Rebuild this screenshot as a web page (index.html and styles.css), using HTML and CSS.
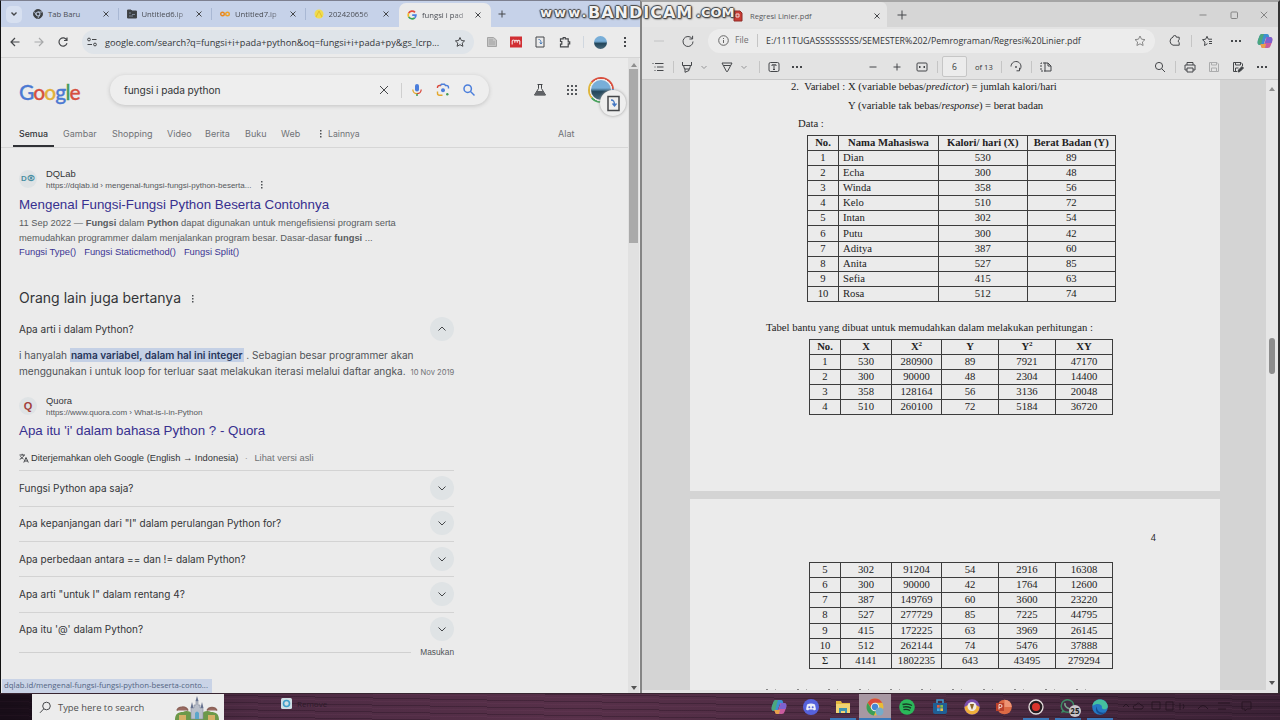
FILE: index.html
```
<!DOCTYPE html>
<html lang="id">
<head>
    <meta charset="UTF-8">
    <title>fungsi i pada python</title>
    <link rel="stylesheet" href="styles.css">
</head>
<body>
<div class="windows">
    <!-- Chrome -->
    <section class="chrome">
        <div class="tabs">
            <span class="tab-menu"><svg width="8" height="8" viewBox="0 0 8 8"><path d="M1.500 2.500 4 5l2.500-2.500" stroke-width="1.400"/></svg></span>
            <div class="tab">
                <svg class="fav" viewBox="0 0 10 10"><circle cx="5" cy="5" r="4.500" class="dark"/><circle cx="5" cy="5" r="2" fill="#3c4043" stroke="#c8d4ea"/><path d="M5 3h4M3.300 6 1.400 2.800M6.700 6 4.800 9.400" stroke="#c8d4ea" stroke-width=".8"/></svg>
                <span class="title">Tab Baru</span><svg class="x" viewBox="0 0 8 8"><path d="m1.500 1.500 5 5m0-5-5 5"/></svg>
            </div>
            <div class="tab">
                <svg class="fav" viewBox="0 0 10 10"><path d="M.500 1h3.500l1 1h4.500v7H.500z" class="dark"/><path d="M2 4h2M5 5.500h3M2 7h4" stroke="#9aa6bb" stroke-width=".7"/></svg>
                <span class="title fade">Untitled6.ip</span><svg class="x" viewBox="0 0 8 8"><path d="m1.500 1.500 5 5m0-5-5 5"/></svg>
            </div>
            <div class="tab">
                <svg class="fav" viewBox="0 0 10 10"><circle cx="2.500" cy="5" r="1.800" stroke="#e8871e" stroke-width="1.400"/><circle cx="7.500" cy="5" r="1.800" stroke="#efa024" stroke-width="1.400"/></svg>
                <span class="title fade">Untitled7.ip</span><svg class="x" viewBox="0 0 8 8"><path d="m1.500 1.500 5 5m0-5-5 5"/></svg>
            </div>
            <div class="tab last">
                <svg class="fav" viewBox="0 0 10 10"><circle cx="5" cy="5" r="4.500" fill="#f0dc50" stroke="none"/><path d="M2 8 5 2l3 6" stroke="#e3bf2b"/></svg>
                <span class="title fade">202420656</span><svg class="x" viewBox="0 0 8 8"><path d="m1.500 1.500 5 5m0-5-5 5"/></svg>
            </div>
            <div class="tab active">
                <svg class="fav" viewBox="0 0 10 10" stroke-width="1.700"><path d="M8 2.300A3.900 3.900 0 0 0 1.700 3.200" stroke="#e34a3c"/><path d="M1.700 3.200a3.900 3.900 0 0 0 0 3.600" stroke="#f0b928"/><path d="M1.700 6.800A3.900 3.900 0 0 0 7.700 7.800" stroke="#39a457"/><path d="M7.700 7.800A3.900 3.900 0 0 0 8.900 5.200H5.200" stroke="#4a7fe0"/></svg>
                <span class="title fade">fungsi i pad</span><svg class="x" viewBox="0 0 8 8"><path d="m1.500 1.500 5 5m0-5-5 5"/></svg>
            </div>
            <svg class="new-tab" viewBox="0 0 8 8"><path d="M4 .500v7M.500 4h7"/></svg>
        </div>

        <div class="address-row">
            <svg class="nav-icon" viewBox="0 0 12 12"><path d="M10.500 6H2m4-4L2 6l4 4"/></svg>
            <svg class="nav-icon faded" viewBox="0 0 12 12"><path d="M1.500 6H10M6 2l4 4-4 4"/></svg>
            <svg class="nav-icon" viewBox="0 0 12 12"><path d="M9.800 4.200A4.100 4.100 0 1 0 10 7.200M10 1.500v3H7"/></svg>
            <div class="url-pill">
                <svg width="12" height="12" viewBox="0 0 12 12"><circle cx="3" cy="3.500" r="1.400"/><path d="M6 3.500h4.500M1.500 8.500H6"/><circle cx="9" cy="8.500" r="1.400"/></svg>
                <span class="url">google.com/search?q=fungsi+i+pada+python&amp;oq=fungsi+i+pada+py&amp;gs_lcrp...</span>
                <svg width="12" height="12" viewBox="0 0 12 12"><path d="m6 1.500 1.400 3 3.200.4-2.400 2.200.7 3.200L6 8.700l-2.900 1.600.7-3.200L1.400 4.900l3.200-.4z"/></svg>
            </div>
            <div class="extensions">
                <svg width="12" height="12" viewBox="0 0 12 12"><path d="M1.500 1.500h6l3 2.500v6.500h-9z" fill="#c4c4c4" stroke="#a5a5a5"/><path d="M3 4h4M3 6h6M3 8h6" stroke="#999" stroke-width=".7"/></svg>
                <svg width="12" height="12" viewBox="0 0 12 12"><path d="M0 .500h12v11H0z" fill="#d12f33" stroke="none"/><path d="M2.200 8.500V5.300a1.300 1.300 0 0 1 2.600 0v1.500M4.800 5.300a1.300 1.300 0 0 1 2.500 0v1.500M7.300 5.300a1.300 1.300 0 0 1 2.500 0v3.200" stroke="#f3dada" stroke-width="1.200"/></svg>
                <svg width="12" height="12" viewBox="0 0 12 12"><path d="M2 1h8v10H2z"/><path d="M4.500 3.500c2 0 2.500 1 2.500 4M5.700 6.500 7 8l1.200-1.500" stroke="#477bb8"/></svg>
                <svg width="12" height="12" viewBox="0 0 12 12"><path d="M1.500 2.800h2.700V1.500h2v1.300h3v3h1.500v2H9.200v3H1.500V8.200h1.300V5.500H1.500z" stroke-width="1.200"/></svg>
            </div>
            <span class="avatar small"></span>
            <svg class="more" viewBox="0 0 4 12"><path d="M1 1h2v2H1zM1 5h2v2H1zM1 9h2v2H1z"/></svg>
        </div>

        <div class="viewport">
            <div class="page">
                <header class="search-head">
                    <div class="logo"><span class="b">G</span><span class="r">o</span><span class="y">o</span><span class="b">g</span><span class="g">l</span><span class="r">e</span></div>
                    <div class="searchbox">
                        <span class="query">fungsi i pada python</span>
                        <svg class="clear" viewBox="0 0 12 12"><path d="m2 2 8 8m0-8-8 8"/></svg>
                        <i class="divider"></i>
                        <svg class="tool" viewBox="0 0 14 14"><rect x="5" y="1" width="4" height="7.500" rx="2" fill="#4b7edb" stroke="none"/><path d="M2.800 6.500A4.200 4.200 0 0 0 7 10.700" stroke="#e3a72d" stroke-width="1.300"/><path d="M11.200 6.500A4.200 4.200 0 0 1 7 10.700" stroke="#d9483b" stroke-width="1.300"/><path d="M7 10.700V13" stroke="#419b55" stroke-width="1.500"/></svg>
                        <svg class="tool lens" viewBox="0 0 14 14" stroke-width="1.400"><path d="M1.500 5V4A2 2 0 0 1 3.500 2.500H5" stroke="#d9483b"/><path d="m4.500 2.500 1-1.300h3l1 1.300h1a2 2 0 0 1 2 2v1" stroke="#4b7edb"/><path d="M1.500 8.500v1.800a2 2 0 0 0 2 2h3" stroke="#e3a72d"/><circle cx="7" cy="7.300" r="2" fill="#4b7edb" stroke="none"/><circle cx="11.300" cy="11.300" r="1.200" fill="#419b55" stroke="none"/></svg>
                        <svg class="tool" viewBox="0 0 14 14" stroke-width="1.500"><circle cx="5.700" cy="5.700" r="3.700" stroke="#4b7edb"/><path d="m8.500 8.500 4 4" stroke="#4b7edb"/></svg>
                    </div>
                    <svg class="labs" viewBox="0 0 14 14"><path d="M4.500 1.500h5M5.500 1.500v4L1.500 12h11L8.500 5.500v-4"/><path d="M4 8h6l2.500 4.300h-11z" fill="#606266" stroke="none"/></svg>
                    <svg class="apps" viewBox="0 0 12 12"><path d="M1 1h2v2H1zM5 1h2v2H5zM9 1h2v2H9zM1 5h2v2H1zM5 5h2v2H5zM9 5h2v2H9zM1 9h2v2H1zM5 9h2v2H5zM9 9h2v2H9z"/></svg>
                    <div class="account">
                        <span class="ring"><span class="avatar"></span></span>
                        <span class="float-btn"><svg width="15" height="17" viewBox="0 0 15 17"><path d="M2 1.500h11v14H2z" stroke-width="1.500"/><path d="M5 5c2.500 0 3.500 1 3.500 5M6.500 8.500l2 2.500 2-2.500" stroke="#4377c4" stroke-width="1.400"/></svg></span>
                    </div>
                </header>

                <nav class="filters">
                    <span class="current">Semua</span>
                    <span class="f-gambar">Gambar</span>
                    <span class="f-shopping">Shopping</span>
                    <span class="f-video">Video</span>
                    <span class="f-berita">Berita</span>
                    <span class="f-buku">Buku</span>
                    <span class="f-web">Web</span>
                    <span class="f-more"><svg class="dots" viewBox="0 0 2 8"><path d="M0 0h1.500v1.500H0zM0 3h1.500v1.500H0zM0 6h1.500v1.500H0z"/></svg>Lainnya</span>
                    <span>Alat</span>
                </nav>

                <main class="results">
                    <article class="result">
                        <div class="site">
                            <span class="site-icon dq">D&#x29BF;</span>
                            <div>
                                <div class="site-name">DQLab</div>
                                <div class="site-url">https://dqlab.id › mengenal-fungsi-fungsi-python-beserta... <svg class="dots" viewBox="0 0 2 8"><path d="M0 0h1.500v1.500H0zM0 3h1.500v1.500H0zM0 6h1.500v1.500H0z"/></svg></div>
                            </div>
                        </div>
                        <h3>Mengenal Fungsi-Fungsi Python Beserta Contohnya</h3>
                        <p class="snippet">11 Sep 2022 — <b>Fungsi</b> dalam <b>Python</b> dapat digunakan untuk mengefisiensi program serta<br>memudahkan programmer dalam menjalankan program besar. Dasar-dasar <b>fungsi</b> ...</p>
                        <div class="sublinks"><a>Fungsi Type()</a><a>Fungsi Staticmethod()</a><a>Fungsi Split()</a></div>
                    </article>

                    <h2>Orang lain juga bertanya <svg class="dots" viewBox="0 0 2 8"><path d="M0 0h1.500v1.500H0zM0 3h1.500v1.500H0zM0 6h1.500v1.500H0z"/></svg></h2>

                    <div class="question open"><span>Apa arti i dalam Python?</span><span class="toggle"><svg viewBox="0 0 10 10"><path d="M1.500 6.500 5 3l3.500 3.500"/></svg></span></div>
                    <p class="answer">i hanyalah <mark>nama variabel, dalam hal ini integer</mark> . Sebagian besar programmer akan<br>menggunakan i untuk loop for terluar saat melakukan iterasi melalui daftar angka.<small>10 Nov 2019</small></p>

                    <article class="result quora">
                        <div class="site">
                            <span class="site-icon qr">Q</span>
                            <div>
                                <div class="site-name">Quora</div>
                                <div class="site-url">https://www.quora.com › What-is-i-in-Python</div>
                            </div>
                        </div>
                        <h3>Apa itu 'i' dalam bahasa Python ? - Quora</h3>
                        <div class="translated">
                            <svg width="10" height="10" viewBox="0 0 10 10"><path d="M.500 2h5.500M3.200.800V2M5 2C4.500 4 2.500 5.500.700 6.300M1.500 3.300C2 4.500 3.500 5.500 4.500 6M4.800 9.500 7 4.500l2.300 5M5.600 8h2.900"/></svg>
                            <span>Diterjemahkan oleh Google (English → Indonesia)</span><i>·</i><span class="orig">Lihat versi asli</span>
                        </div>
                    </article>

                    <div class="question"><span>Fungsi Python apa saja?</span><span class="toggle"><svg viewBox="0 0 10 10"><path d="M1.500 3.500 5 7l3.500-3.500"/></svg></span></div>
                    <div class="question"><span>Apa kepanjangan dari "I" dalam perulangan Python for?</span><span class="toggle"><svg viewBox="0 0 10 10"><path d="M1.500 3.500 5 7l3.500-3.500"/></svg></span></div>
                    <div class="question"><span>Apa perbedaan antara == dan != dalam Python?</span><span class="toggle"><svg viewBox="0 0 10 10"><path d="M1.500 3.500 5 7l3.500-3.500"/></svg></span></div>
                    <div class="question"><span>Apa arti "untuk I" dalam rentang 4?</span><span class="toggle"><svg viewBox="0 0 10 10"><path d="M1.500 3.500 5 7l3.500-3.500"/></svg></span></div>
                    <div class="question"><span>Apa itu '@' dalam Python?</span><span class="toggle"><svg viewBox="0 0 10 10"><path d="M1.500 3.500 5 7l3.500-3.500"/></svg></span></div>
                    <div class="feedback"><hr><span>Masukan</span></div>
                </main>
            </div>
            <div class="scrollbar"><span class="up"></span><span class="thumb"></span><span class="down"></span></div>
        </div>
        <div class="status">dqlab.id/mengenal-fungsi-fungsi-python-beserta-conto...</div>
    </section>

    <!-- Edge -->
    <section class="edge">
        <div class="e-tabs">
            <div class="e-tab">
                <svg width="10" height="12" viewBox="0 0 10 12"><path d="M1 1h6l2 2v8H1z" fill="#c93c34" stroke="#8f2d28"/><path d="M3 4h3v3H3z" stroke="#f0d8d6"/></svg>
                <span class="title">Regresi Linier.pdf</span>
                <svg width="8" height="8" viewBox="0 0 8 8"><path d="m1.500 1.500 5 5m0-5-5 5"/></svg>
            </div>
            <svg class="e-new" viewBox="0 0 10 10"><path d="M5 .500v9M.500 5h9"/></svg>
            <div class="controls">
                <svg viewBox="0 0 10 10"><path d="M1.500 5h7"/></svg>
                <svg viewBox="0 0 10 10"><rect x="2" y="2" width="6.500" height="6.500" rx="1"/></svg>
                <svg viewBox="0 0 10 10"><path d="m1.800 1.800 6.400 6.400m0-6.400L1.800 8.200"/></svg>
            </div>
        </div>

        <div class="e-address">
            <svg class="e-back" viewBox="0 0 12 12"><path d="M1 6h10"/></svg>
            <svg class="e-reload" viewBox="0 0 12 12"><path d="M10 3.500A5 5 0 1 0 11 6.500M10.600.800v3.200H7.400"/></svg>
            <div class="e-pill">
                <svg width="11" height="11" viewBox="0 0 11 11"><circle cx="5.500" cy="5.500" r="4.800"/><path d="M5.500 5v3M5.500 3v1"/></svg>
                <span class="file">File</span>
                <span class="path">E:/111TUGASSSSSSSSS/SEMESTER%202/Pemrograman/Regresi%20Linier.pdf</span>
                <svg width="12" height="12" viewBox="0 0 12 12"><path d="m6 1 1.500 3.200 3.500.4-2.600 2.400.7 3.500L6 8.800l-3.100 1.700.7-3.500L1 4.600l3.500-.4z" stroke="#888"/></svg>
            </div>
            <svg class="e-ext" viewBox="0 0 12 12"><path d="M4 2.200a1.700 1.700 0 0 1 3.400 0h2.800v2.500a1.500 1.500 0 0 0 0 2.800v2.700H4A4.200 4.200 0 0 1 4 2.200z"/></svg>
            <i class="bar e-bar"></i>
            <svg class="e-fav" viewBox="0 0 12 12"><path d="M6.500 8.700 3.500 10.500l.5-3.400L1.500 4.700 4.700 4.200 6 1.300l1.300 2.900H11M8 6.500h3M8 8.500h3"/></svg>
            <svg class="e-dots" viewBox="0 0 12 4"><path d="M1 1h2v2H1zM5 1h2v2H5zM9 1h2v2H9z"/></svg>
            <svg class="copilot" viewBox="0 0 16 16"><use href="#copilot"/></svg>
        </div>

        <div class="pdf-bar">
            <svg class="p-list" viewBox="0 0 12 12"><path d="M.500 2.500h1M3 2.500h8.500M2.500 6h1M5 6h6.500M2.500 9.500h1M5 9.500h6.500"/></svg>
            <i class="bar"></i>
            <svg class="p-mark" viewBox="0 0 12 12"><path d="M1.500 1v3.500h9V1M2.500 4.500l1 3.500h5l1-3.500M4 8v3.300L8 9.500V8"/></svg>
            <svg class="p-chev" viewBox="0 0 8 8"><path d="M1.500 3 4 5.500 6.500 3"/></svg>
            <svg class="p-pen" viewBox="0 0 12 12"><path d="M1 2h10L6.500 10.500h-1zM2.500 4.500h7"/></svg>
            <svg class="p-chev" viewBox="0 0 8 8"><path d="M1.500 3 4 5.500 6.500 3"/></svg>
            <i class="bar b2"></i>
            <svg class="p-text" viewBox="0 0 12 12"><rect x="1" y="1.500" width="10" height="9" rx="1.500"/><path d="M4 5V3.800h4V5M6 3.800V8.500M5 8.500h2"/></svg>
            <svg class="e-dots p-more" viewBox="0 0 12 4"><path d="M1 1h2v2H1zM5 1h2v2H5zM9 1h2v2H9z"/></svg>
            <svg class="p-minus" viewBox="0 0 8 8"><path d="M.500 4h7"/></svg>
            <svg class="p-plus" viewBox="0 0 8 8"><path d="M.500 4h7M4 .500v7"/></svg>
            <svg class="p-fit" viewBox="0 0 12 12"><rect x="1" y="2" width="10" height="8" rx="1"/><path d="M3 6h2M7 6h2M4 5 3 6l1 1M8 5l1 1-1 1"/></svg>
            <i class="bar b3"></i>
            <span class="page-no">6</span>
            <span class="of">of 13</span>
            <i class="bar b4"></i>
            <svg class="p-rot" viewBox="0 0 12 12"><path d="M1 5.500A5 5 0 1 1 9 9.500M9.500 6.800v3H6.500"/><circle cx="6" cy="6" r=".6"/></svg>
            <i class="bar b5"></i>
            <svg class="p-view" viewBox="0 0 12 12"><path d="M5 2H1v8h4" stroke-dasharray="2 1"/><path d="M5 1.500v9M5 2h3l3 3v5H5M8 2v3h3"/></svg>
            <svg class="p-find" viewBox="0 0 12 12"><circle cx="5" cy="5" r="3.600"/><path d="m7.700 7.700 3.300 3.300"/></svg>
            <i class="bar b6"></i>
            <svg class="p-print" viewBox="0 0 12 12"><path d="M3 4V1.500h6V4M3 9H1V4h10v5H9M3 7h6v4H3z"/></svg>
            <svg class="p-save off" viewBox="0 0 12 12"><path d="M1.500 1.500h7.500l1.500 1.500v7.500h-9zM3.500 1.500V4h5V1.500M3.500 10.500V7h5v3.500"/></svg>
            <svg class="p-save" viewBox="0 0 12 12"><path d="M5 10.500H1.500v-9H9L10.500 3v2M3.500 1.500V4h5V1.500M3.500 10.500V7h3"/><path d="m6 11 .5-2L10 5.500l1.500 1.500L8 10.500z" class="dark"/></svg>
            <svg class="e-dots" viewBox="0 0 12 4"><path d="M1 1h2v2H1zM5 1h2v2H5zM9 1h2v2H9z"/></svg>
        </div>

        <div class="pdf-view">
            <div class="sheets">
                <div class="sheet first">
                    <p class="var-x">2.&nbsp; Variabel : X (variable bebas/<em>predictor</em>) = jumlah kalori/hari</p>
                    <p class="var-y">Y (variable tak bebas/<em>response</em>) = berat badan</p>
                    <p class="data">Data :</p>
                    <table class="students">
                        <colgroup><col class="c31"><col class="c101"><col class="c88"><col class="c88"></colgroup>
                        <tr><th>No.</th><th>Nama Mahasiswa</th><th>Kalori/ hari (X)</th><th>Berat Badan (Y)</th></tr>
                        <tr><td>1</td><td>Dian</td><td>530</td><td>89</td></tr>
                        <tr><td>2</td><td>Echa</td><td>300</td><td>48</td></tr>
                        <tr><td>3</td><td>Winda</td><td>358</td><td>56</td></tr>
                        <tr><td>4</td><td>Kelo</td><td>510</td><td>72</td></tr>
                        <tr><td>5</td><td>Intan</td><td>302</td><td>54</td></tr>
                        <tr><td>6</td><td>Putu</td><td>300</td><td>42</td></tr>
                        <tr><td>7</td><td>Aditya</td><td>387</td><td>60</td></tr>
                        <tr><td>8</td><td>Anita</td><td>527</td><td>85</td></tr>
                        <tr><td>9</td><td>Sefia</td><td>415</td><td>63</td></tr>
                        <tr><td>10</td><td>Rosa</td><td>512</td><td>74</td></tr>
                    </table>
                    <p class="helper">Tabel bantu yang dibuat untuk memudahkan dalam melakukan perhitungan :</p>
                    <table class="calc top">
                        <colgroup><col class="c31"><col class="c51"><col class="c50"><col class="c57"><col class="c57"><col class="c57"></colgroup>
                        <tr><th>No.</th><th>X</th><th>X<sup>2</sup></th><th>Y</th><th>Y<sup>2</sup></th><th>XY</th></tr>
                        <tr><td>1</td><td>530</td><td>280900</td><td>89</td><td>7921</td><td>47170</td></tr>
                        <tr><td>2</td><td>300</td><td>90000</td><td>48</td><td>2304</td><td>14400</td></tr>
                        <tr><td>3</td><td>358</td><td>128164</td><td>56</td><td>3136</td><td>20048</td></tr>
                        <tr><td>4</td><td>510</td><td>260100</td><td>72</td><td>5184</td><td>36720</td></tr>
                    </table>
                </div>
                <div class="sheet second">
                    <div class="sheet-no">4</div>
                    <table class="calc rest">
                        <colgroup><col class="c31"><col class="c51"><col class="c50"><col class="c57"><col class="c57"><col class="c57"></colgroup>
                        <tr><td>5</td><td>302</td><td>91204</td><td>54</td><td>2916</td><td>16308</td></tr>
                        <tr><td>6</td><td>300</td><td>90000</td><td>42</td><td>1764</td><td>12600</td></tr>
                        <tr><td>7</td><td>387</td><td>149769</td><td>60</td><td>3600</td><td>23220</td></tr>
                        <tr><td>8</td><td>527</td><td>277729</td><td>85</td><td>7225</td><td>44795</td></tr>
                        <tr><td>9</td><td>415</td><td>172225</td><td>63</td><td>3969</td><td>26145</td></tr>
                        <tr><td>10</td><td>512</td><td>262144</td><td>74</td><td>5476</td><td>37888</td></tr>
                        <tr><td>Σ</td><td>4141</td><td>1802235</td><td>643</td><td>43495</td><td>279294</td></tr>
                    </table>
                    <div class="cut-line"></div>
                </div>
            </div>
            <div class="e-scroll"><span class="up"></span><span class="e-thumb"></span><span class="down"></span></div>
        </div>
    </section>
</div>

<footer class="taskbar">
    <div class="start-gap"></div>
    <div class="task-search">
        <svg width="13" height="13" viewBox="0 0 13 13"><circle cx="7.500" cy="5" r="3.800"/><path d="M4.800 7.800 1 11.800"/></svg>
        <span>Type here to search</span>
        <svg class="castle" viewBox="0 0 46 24"><path d="M1 24c0-6 3-8 8-8 3-2 8-1 9 2h10c1-3 6-4 9-2 5 0 8 2 8 8z" fill="#6c994a" stroke="none"/><path d="M3 14.500c1-4 9-5 11 0M33 14.500c2-4 8-4 10 0" fill="#9a6a62" stroke="#8c6258" stroke-width="1.500"/><path d="M17 23V12h3V9h2V5h2v4h2v3h3v11z" fill="#b9bfca" stroke="#858c9c" stroke-width=".6"/><path d="m16.500 12 1.500-6 1.500 6M21.500 5 23 0l1.500 5M26.500 12 28 6l1.500 6" fill="#66728f" stroke="none"/><path d="M21 23v-6q2-3 4 0v6z" fill="#5ca6c9" stroke="none"/><path d="M5 19h7v5H5zM34 19h7v5h-7z" fill="#d5b067" stroke="none"/></svg>
    </div>
    <div class="desk-icon"><svg width="11" height="11" viewBox="0 0 11 11"><rect width="11" height="11" rx="1.500" fill="#cfdfe4" stroke="none"/><circle cx="5.500" cy="5.500" r="3" stroke="#3f9fc9" stroke-width="1.600"/></svg><span>Remove</span></div>

    <div class="apps-row">
        <span class="app"><svg viewBox="0 0 16 16"><g id="copilot" stroke="none"><path d="M5 1h5c2 0 2 2 2.500 4H9L6.500 12H3C0 12 .500 9 1 7l1.500-4Q3 1 5 1z" fill="#3d8fd0"/><path d="M2.500 3Q3 1 5 1h2L5.500 6 4 12H3C0 12 .500 9 1 7z" fill="#4ba67d"/><path d="M11 15H6c-2 0-2-2-2.500-4H7l2.500-7H13c3 0 2.500 3 2 5l-1.500 4Q13 15 11 15z" fill="#c95b9e"/><path d="M6 15c-2 0-2-2-2.500-4H9l-1 4z" fill="#e8a04a"/><path d="M10 4h3c3 0 2.500 3 2 5l-.5 1H8z" fill="#7c62cf"/></g></svg></span>
        <span class="app"><svg viewBox="0 0 16 16"><circle cx="8" cy="8" r="8" fill="#5662dc" stroke="none"/><path d="M4 5.500Q8 3.500 12 5.500l1 5-2 1-1-1H6l-1 1-2-1z" fill="#eceef8" stroke="none"/><circle cx="6.300" cy="8.300" r="1" class="blurple"/><circle cx="9.700" cy="8.300" r="1" class="blurple"/></svg></span>
        <span class="app run"><svg viewBox="0 0 16 16"><path d="M1 2h5l1 2h8v10H1z" fill="#e6b93e" stroke="none"/><path d="M1 5h14v9H1z" fill="#f2d574" stroke="none"/><path d="M4 9h8v5h-2v-2H6v2H4z" fill="#4296b0" stroke="none"/></svg></span>
        <span class="app run focus"><svg viewBox="0 0 16 16" class="big"><circle cx="8" cy="8" r="7.500" fill="#e9bb35" stroke="none"/><path d="M1.500 4.200A7.500 7.500 0 0 1 14.500 4.200H8L5 9.500z" fill="#d84b3d" stroke="none"/><path d="M1.500 4.200 5 10l4 1-2 4.500A7.500 7.500 0 0 1 1.500 4.200z" fill="#3a9d58" stroke="none"/><circle cx="8" cy="8" r="3.300" fill="#4487d6" stroke="#e9e9e9"/><circle cx="12" cy="12" r="3.500" fill="#76abc9" stroke="none"/></svg></span>
        <span class="app"><svg viewBox="0 0 16 16"><circle cx="8" cy="8" r="7.800" fill="#2bb85a" stroke="none"/><path d="M3.500 5.500q5-1.500 9.500 1M4 8.200q4-1.200 8 .9M4.500 10.700q3.500-1 6.500.8" stroke="#173c25" stroke-width="1.400"/></svg></span>
        <span class="app"><svg viewBox="0 0 16 16"><path d="M5 4V1h6v3" stroke="#3f9bd0" stroke-width="1.500"/><path d="M1 4h14v9q0 2-2 2H3q-2 0-2-2z" fill="#205e94" stroke="none"/><path d="M5 6h2.700v2.700H5z" fill="#df6242" stroke="none"/><path d="M8.300 6H11v2.700H8.300z" fill="#83b84d" stroke="none"/><path d="M5 9.300h2.700V12H5z" fill="#49a5dd" stroke="none"/><path d="M8.300 9.300H11V12H8.300z" fill="#e6bf49" stroke="none"/></svg></span>
        <span class="app"><svg viewBox="0 0 16 16"><circle cx="8" cy="8" r="7.800" fill="#7a4fae" stroke="none"/><path d="M.500 8a7.500 7.500 0 0 0 15 0L12 6H4z" fill="#efb03b" stroke="none"/><circle cx="8" cy="7.500" r="4.500" fill="#f1ece6" stroke="none"/><path d="M6 5h4l-.8 3L8 11 6.800 8z" fill="#8a6428" stroke="none"/></svg></span>
        <span class="app"><svg viewBox="0 0 16 16"><circle cx="8.500" cy="8" r="7.300" fill="#dc6a45" stroke="none"/><path d="M8.500.700A7.300 7.300 0 0 1 15.800 8H8.500z" fill="#ee9374" stroke="none"/><path d="M0 4h8v8H0z" fill="#b9402b" stroke="none"/><path d="M3 10.500v-5h1.500a1.500 1.500 0 0 1 0 3H3" stroke="#f3dcd6"/></svg></span>
        <span class="app run"><svg viewBox="0 0 16 16"><circle cx="8" cy="8" r="7" fill="#241c20" stroke="#e5dede" stroke-width="1.300"/><circle cx="8" cy="8" r="4" fill="#da342c" stroke="none"/></svg></span>
        <span class="app run"><svg viewBox="0 0 16 16"><circle cx="7.500" cy="7" r="6.300" stroke="#3c8b63" fill="#432c43" stroke-width="1.500"/><path d="m1 14 1.500-4L5 13z" fill="#3c8b63" stroke="none"/><path d="M5 4q-1 4 5 6" stroke="#78a68b" stroke-width="1.600"/></svg><b class="badge">25</b></span>
        <span class="app run"><svg viewBox="0 0 16 16"><circle cx="8" cy="8" r="7.800" fill="#2479c4" stroke="none"/><path d="M.500 7C1-1 14-2 15.800 7c.2 4-5 4-6 2C11 6 6 3 .500 7z" fill="#45c19f" stroke="none"/><path d="M5 7c-1 5 4 8 9 6-5 5-13 0-9-6z" fill="#164d92" stroke="none"/></svg></span>
    </div>
    <svg class="tray" viewBox="0 0 150 14"><path d="m3 8 3-3 3 3M14 10q-2-4 2-4 2-4 5 0 4 1 1 4zM32 3h8v7h-8zM46 3h7v8h-7zM60 4v7M63 5q2 2 0 5M78 10q5-7 10 0M98 4h12M98 10h8M122 3h9v7h-4l-2 2v-2h-3z"/></svg>
</footer>
<div class="watermark"><span class="www">www.</span><span class="brand">BANDICAM</span><span class="com">.COM</span></div>
</body>
</html>
```
FILE: styles.css
```
* {
    box-sizing: border-box;
}
body {
    margin: 0;
    width: 1280px;
    height: 720px;
    overflow: hidden;
    background-color: #ebebeb;
    color: #333538;
    font-family: "Open Sans", "Noto Sans", sans-serif;
    font-size: 9px;
}
p, h2, h3 {
    margin: 0;
    font-weight: normal;
}
svg {
    flex: none;
    fill: none;
    stroke: #45474a;
    display: block;
}
.dark {
    fill: #3c4043;
}
i {
    font-style: normal;
}
span, a {
    white-space: nowrap;
}
.windows {
    display: flex;
    height: 693px;
}

/* ---------- Chrome ---------- */
.chrome {
    position: relative;
    width: 640px;
    height: 693px;
    border-left: 1px solid #111;
    border-top: 1px solid #7d8090;
    display: flex;
    flex-direction: column;
}
.tabs {
    display: flex;
    align-items: center;
    height: 26px;
    background-color: #c6d2e9;
}
.tab-menu {
    width: 16px;
    height: 17px;
    margin: 0 3px 0 5px;
    border-radius: 5px;
    background-color: #d7e0f0;
    display: flex;
    align-items: center;
    justify-content: center;
}
.tab {
    width: 93.500px;
    height: 24px;
    padding: 0 9px 0 8px;
    display: flex;
    align-items: center;
    position: relative;
}
.tab::after {
    content: "";
    position: absolute;
    right: 0;
    height: 12px;
    border-right: 1px solid #a9b8d4;
}
.tab.last::after, .tab.active::after {
    display: none;
}
.tab.active {
    align-self: flex-end;
    width: 92px;
    background-color: #ebebeb;
    border-radius: 7px 7px 0 0;
}
.fav {
    width: 10px;
    height: 10px;
    margin-right: 5px;
}
.tab .title {
    flex: 1;
    font-size: 7.700px;
    color: #4a4d54;
}
.tab .fade {
    -webkit-mask-image: linear-gradient(to right, #000 70%, rgba(0, 0, 0, .2));
    mask-image: linear-gradient(to right, #000 70%, rgba(0, 0, 0, .2));
}
.x {
    width: 8px;
    height: 8px;
    margin-left: 6px;
}
.new-tab {
    width: 8px;
    height: 8px;
    margin-left: 7px;
}
.address-row {
    display: flex;
    align-items: center;
    height: 31px;
    padding-left: 8px;
    border-bottom: 1px solid #d5d5d5;
}
.nav-icon {
    width: 12px;
    height: 12px;
    margin-right: 12px;
    stroke-width: 1.200;
}
.faded {
    opacity: .4;
}
.url-pill {
    display: flex;
    align-items: center;
    width: 392px;
    height: 24px;
    margin-left: 1px;
    padding: 0 8px 0 4px;
    border-radius: 12px;
    background-color: #dfe4e9;
}
.url {
    flex: 1;
    margin-left: 7px;
    font-size: 9.200px;
}
.extensions {
    display: flex;
    align-items: center;
    gap: 12.200px;
    margin-left: 12px;
    padding-right: 12px;
    border-right: 1px solid #d0d7df;
}
.avatar {
    display: block;
    width: 20px;
    height: 20px;
    border-radius: 50%;
    background: linear-gradient(#78aed8 0 40%, #4a7795 50%, #23465b 58%, #49697a 100%);
}
.avatar.small {
    width: 13px;
    height: 13px;
    margin-left: 10px;
}
.more {
    width: 4px;
    height: 12px;
    margin-left: 16px;
    fill: #45474a;
    stroke: none;
}
.viewport {
    display: flex;
    flex: 1;
    min-height: 0;
}
.page {
    width: 627px;
    padding-top: 17px;
}
.scrollbar {
    width: 11px;
    background-color: #e1e1e1;
    display: flex;
    flex-direction: column;
    align-items: center;
    padding: 5px 0 3px;
}
.up {
    border: 3px solid transparent;
    border-top: none;
    border-bottom: 4px solid #8e8e8e;
}
.thumb {
    width: 9px;
    height: 174px;
    margin-top: 2px;
    background-color: #aaaaaa;
}
.down {
    margin-top: auto;
    border: 3px solid transparent;
    border-bottom: none;
    border-top: 4px solid #555;
}
.search-head {
    display: flex;
    align-items: center;
    height: 30px;
    padding-left: 18px;
}
.logo {
    width: 91px;
    font-family: Lato, sans-serif;
    font-size: 21px;
    font-weight: 500;
    line-height: 31px;
    padding-top: 2px;
    letter-spacing: -.9px;
    -webkit-text-stroke: .3px;
}
.b { color: #4c79d2; }
.r { color: #d6503f; }
.y { color: #e2b13b; }
.g { color: #459d5c; }
.searchbox {
    display: flex;
    align-items: center;
    width: 379px;
    height: 30px;
    padding-left: 14px;
    border-radius: 15px;
    background-color: #eeeeee;
    box-shadow: 0 1px 4px #c2c2c2;
}
.query {
    width: 254px;
    font-family: Inter, sans-serif;
    font-size: 10.200px;
    letter-spacing: -.1px;
}
.clear {
    width: 12px;
    height: 12px;
}
.divider {
    height: 15px;
    margin: 0 8px 0 11px;
    border-right: 1px solid #cfcfcf;
}
.tool {
    width: 14px;
    height: 14px;
    margin-right: 12px;
}
.labs {
    width: 14px;
    height: 14px;
    margin-left: 44px;
}
.apps {
    width: 12px;
    height: 12px;
    margin-left: 19px;
    fill: #55585c;
    stroke: none;
}
.account {
    position: relative;
    margin-left: 10px;
}
.ring {
    display: flex;
    align-items: center;
    justify-content: center;
    width: 26px;
    height: 26px;
    border-radius: 50%;
    background: radial-gradient(#ebebeb 11px, transparent 11.500px), conic-gradient(from -50deg, #d9503f 0 38%, #4f7fd2 38% 60%, #49a35d 60% 78%, #dfb63c 78%);
}
.float-btn {
    position: absolute;
    left: 12px;
    top: 13px;
    width: 26px;
    height: 26px;
    border-radius: 50%;
    background-color: #eeeeee;
    box-shadow: 0 0 3px #999;
    display: flex;
    align-items: center;
    justify-content: center;
}
.filters {
    display: flex;
    align-items: center;
    height: 28px;
    margin-top: 15px;
    padding-left: 12px;
    border-bottom: 1px solid #d6d6d6;
    font-family: Inter, sans-serif;
    font-size: 9px;
    color: #707276;
}
.current {
    width: 41px;
    margin-right: 9px;
    height: 27px;
    line-height: 27px;
    text-align: center;
    color: #303236;
    border-bottom: 2px solid #303236;
    font-size: 8.800px;
    font-weight: 500;
}
.f-gambar { width: 49px; }
.f-shopping { width: 55px; }
.f-video { width: 38px; }
.f-berita { width: 40px; }
.f-buku { width: 36px; }
.f-web { width: 39px; }
.f-more {
    width: 238px;
    display: flex;
    align-items: center;
    gap: 6px;
    font-size: 8.700px;
}
.dots {
    display: inline-block;
    width: 2px;
    height: 8px;
    fill: #4d5054;
    stroke: none;
}
.results {
    width: 453px;
    padding: 18px 0 0 18px;
    font-family: "Liberation Sans", Arial, sans-serif;
}
.site {
    display: flex;
    align-items: center;
    height: 26px;
}
.site-icon {
    width: 18px;
    height: 18px;
    margin-right: 9px;
    border-radius: 50%;
    background-color: #dfe3e5;
    font-size: 8px;
    font-weight: bold;
    line-height: 18px;
    text-align: center;
}
.dq { color: #4a8fa3; }
.qr {
    color: #a2413b;
    font-size: 11px;
}
.site-name {
    font-size: 9.400px;
    line-height: 13px;
}
.site-url {
    font-size: 8.020px;
    line-height: 12px;
    color: #55585c;
    white-space: nowrap;
}
.site-url .dots {
    margin-left: 7px;
    vertical-align: -1px;
}
h3 {
    font-size: 13.350px;
    line-height: 18px;
    height: 18px;
    margin-top: 4px;
    color: #37308f;
    white-space: nowrap;
}
.snippet {
    margin-top: 2px;
    font-size: 9.340px;
    line-height: 14.600px;
    color: #595c60;
    white-space: nowrap;
}
.sublinks {
    display: flex;
    gap: 8px;
    font-size: 9.400px;
    line-height: 14px;
    color: #3b3493;
}
h2 {
    margin-top: 29px;
    font-family: Inter, sans-serif;
    font-size: 14px;
    line-height: 20px;
    white-space: nowrap;
}
h2 .dots {
    margin-left: 7px;
}
.question {
    display: flex;
    align-items: center;
    justify-content: space-between;
    height: 35.300px;
    width: 435px;
    padding-bottom: 1px;
    border-top: 1px solid #d3d3d3;
    font-family: Inter, sans-serif;
    font-size: 10px;
}
.question.open {
    margin-top: 4px;
    border: none;
}
.toggle {
    display: flex;
    align-items: center;
    justify-content: center;
    width: 24px;
    height: 24px;
    border-radius: 50%;
    background-color: #dfe3e5;
}
.toggle svg {
    width: 10px;
    height: 10px;
}
.answer {
    font-family: Inter, sans-serif;
    font-size: 10.080px;
    line-height: 16px;
    color: #505357;
    white-space: nowrap;
}
mark {
    padding: 1px;
    background-color: #c4d0e5;
    color: #26355a;
    font-weight: 600;
}
.answer small {
    margin-left: 5px;
    font-size: 7.600px;
    color: #707276;
}
.quora {
    margin-top: 12px;
}
.quora h3 {
    margin-top: 3px;
}
.translated {
    display: flex;
    align-items: center;
    height: 12px;
    margin: 12px 0 6px;
    font-size: 9.340px;
}
.translated span {
    margin-left: 2px;
}
.translated i {
    width: 16px;
    text-align: center;
    color: #999;
}
.translated .orig {
    margin-left: 0;
    color: #707276;
}
.feedback {
    display: flex;
    align-items: center;
    height: 11px;
    width: 435px;
    font-size: 8.300px;
    color: #505357;
}
.feedback hr {
    flex: 1;
    margin: 0 9px 0 0;
    border: none;
    border-top: 1px solid #d0d0d0;
}
.status {
    position: absolute;
    left: 1px;
    bottom: 0;
    width: 210px;
    height: 14px;
    padding-left: 2px;
    background-color: #c9d3e6;
    color: #536583;
    font-size: 7.750px;
    line-height: 13px;
    white-space: nowrap;
}

/* ---------- Edge ---------- */
.edge {
    width: 640px;
    height: 693px;
    border-left: 2px solid #858585;
    border-right: 2px solid #333;
    border-top: 2px solid #a5a5a5;
    background-color: #e3e3e3;
    display: flex;
    flex-direction: column;
}
.e-tabs {
    display: flex;
    align-items: center;
    height: 25px;
    background-color: #d6d6d6;
}
.e-tab {
    display: flex;
    align-items: center;
    width: 245px;
    height: 25px;
    padding: 2px 6px 0 91px;
    border-radius: 0 6px 0 0;
    background-color: #e5e5e5;
}
.e-tab .title {
    flex: 1;
    margin-left: 7px;
    font-size: 7.600px;
    color: #55585c;
}
.e-new {
    width: 10px;
    height: 10px;
    margin-left: 10px;
}
.controls {
    display: flex;
    gap: 20.500px;
    margin-left: auto;
    margin-right: 9px;
}
.controls svg {
    width: 10px;
    height: 10px;
    stroke: #858585;
}
.e-address {
    display: flex;
    align-items: center;
    height: 27px;
}
.e-back {
    width: 12px;
    height: 12px;
    margin-left: 11px;
    opacity: .2;
}
.e-reload {
    width: 12px;
    height: 12px;
    margin-left: 17px;
}
.e-pill {
    display: flex;
    align-items: center;
    width: 447px;
    height: 24px;
    margin-left: 14px;
    padding: 0 9px 0 10px;
    border-radius: 12px;
    background-color: #ececec;
}
.e-pill svg {
    stroke: #666;
}
.file {
    width: 23px;
    margin-left: 6px;
    border-right: 1px solid #c5c5c5;
    font-size: 8.600px;
    line-height: 13px;
    color: #707070;
}
.path {
    flex: 1;
    margin-left: 8px;
    font-size: 8.880px;
}
.e-ext, .e-fav {
    width: 12px;
    height: 12px;
    margin-left: 14px;
}
.e-address .e-fav, .e-address .e-bar {
    margin-left: 9.500px;
}
.e-dots {
    width: 12px;
    height: 4px;
    fill: #45474a;
    stroke: none;
}
.e-address .e-dots {
    margin-left: 17px;
}
.copilot {
    width: 16px;
    height: 16px;
    margin-left: 15px;
}
.pdf-bar {
    display: flex;
    align-items: center;
    height: 26px;
    padding-left: 10px;
    border-bottom: 1px solid #c9c9c9;
}
.pdf-bar svg {
    width: 12px;
    height: 12px;
}
.pdf-bar .e-dots {
    height: 4px;
}
.bar {
    width: 1px;
    height: 12px;
    margin-left: 9px;
    background-color: #c5c5c5;
}
.pdf-bar .p-mark { margin-left: 7px; }
.pdf-bar .p-chev {
    width: 8px;
    height: 8px;
    margin-left: 7px;
    opacity: .5;
}
.pdf-bar .p-pen { margin-left: 13px; }
.b2 { margin-left: 11px; }
.pdf-bar .p-text { margin-left: 8px; }
.pdf-bar .p-more { margin-left: 11px; }
.pdf-bar .p-minus, .pdf-bar .p-plus {
    width: 8px;
    height: 8px;
    margin-left: 66px;
}
.pdf-bar .p-plus { margin-left: 16px; }
.pdf-bar .p-fit { margin-left: 15px; }
.page-no {
    width: 25px;
    height: 21px;
    margin-left: 4px;
    border: 1px solid #c6c6c6;
    border-radius: 2px;
    background-color: #ececec;
    line-height: 19px;
    text-align: center;
    font-size: 8.500px;
}
.of {
    width: 18px;
    margin-left: 8px;
    font-size: 7.600px;
}
.b4 { margin-left: 8px; }
.pdf-bar .p-rot { margin-left: 8px; }
.pdf-bar .p-view { margin-left: 8px; }
.pdf-bar .p-find { margin-left: 102px; }
.pdf-bar .p-print { margin-left: 8px; }
.pdf-bar .p-save { margin-left: 12px; }
.pdf-bar .p-save + .e-dots { margin-left: 12px; }
.off { opacity: .35; }
.pdf-view {
    display: flex;
    justify-content: space-between;
    flex: 1;
    min-height: 0;
    padding-left: 48px;
    background-color: #d4d4d4;
    border-bottom: 3px solid #e3e3e3;
}
.sheets {
    width: 530px;
    overflow: hidden;
    font-family: "Liberation Serif", "Times New Roman", serif;
    font-size: 10.660px;
    color: #222;
}
.sheet {
    background-color: #ebebeb;
}
.first {
    height: 411px;
}
.first p {
    line-height: 14px;
    white-space: nowrap;
}
.first .var-x {
    padding-left: 101px;
}
.first .var-y {
    padding: 5px 0 0 158px;
}
.first .data {
    padding: 4px 0 0 108px;
}
table {
    border-collapse: collapse;
    table-layout: fixed;
    text-align: center;
    line-height: 12px;
}
th, td {
    padding: 0;
    border: 1px solid #3c3c3c;
    height: 14px;
}
.students {
    width: 309px;
    height: 167px;
    margin: 4px 0 0 117px;
}
.students td:nth-child(2) {
    padding-left: 4px;
    text-align: left;
}
.c31 { width: 31px; }
.c101 { width: 100px; }
.c88 { width: 88.500px; }
.c51 { width: 51px; }
.c50 { width: 50px; }
.c57 { width: 57px; }
.first .helper {
    margin-top: 19px;
    padding-left: 76px;
}
.calc {
    width: 304px;
    margin-left: 119px;
}
.top {
    height: 76px;
    margin-top: 4px;
}
sup {
    font-size: 7px;
    line-height: 0;
    vertical-align: 4px;
}
.second {
    height: 200px;
    margin-top: 8px;
}
.sheet-no {
    height: 63px;
    padding: 32px 64px 0 0;
    font-family: "Open Sans", sans-serif;
    font-size: 9px;
    line-height: 13px;
    text-align: right;
}
.rest {
    height: 107px;
}
.cut-line {
    width: 332px;
    height: 1px;
    margin: 20px 0 0 76px;
    background: repeating-linear-gradient(90deg, #888 0 2px, transparent 2px 9px, #aaa 9px 10px, transparent 10px 31px);
}
.e-scroll {
    display: flex;
    flex-direction: column;
    align-items: center;
    width: 12px;
    padding: 7px 0 5px;
    background-color: #e6e6e6;
}
.e-thumb {
    width: 6px;
    height: 36px;
    margin-top: 247px;
    border-radius: 3px;
    background-color: #8d8d8d;
}

/* ---------- Taskbar ---------- */
.taskbar {
    display: flex;
    height: 27px;
    border-top: 1px solid #382631;
    background: repeating-linear-gradient(1deg, rgba(28, 12, 26, .3) 0 1px, transparent 1px 4px, rgba(125, 70, 105, .15) 4px 5px, transparent 5px 7px), linear-gradient(90deg, #241522, #4d2b43 20%, #573049 45%, #4b2b41 75%, #3a2135);
}
.start-gap {
    width: 32px;
    background-color: rgba(15, 8, 16, .55);
}
.task-search {
    display: flex;
    align-items: center;
    width: 192px;
    height: 26px;
    padding-left: 7px;
    background-color: #ececec;
    font-size: 9.400px;
    color: #505050;
}
.task-search span {
    width: 116px;
    margin-left: 6px;
}
.castle {
    width: 46px;
    height: 24px;
    align-self: flex-end;
}
.desk-icon {
    display: flex;
    width: 539px;
    padding: 4px 0 0 57px;
    color: #2d1a29;
    font-size: 8px;
}
.desk-icon span {
    margin-left: 5px;
}
.apps-row {
    display: flex;
    width: 354px;
}
.app {
    position: relative;
    display: flex;
    align-items: center;
    justify-content: center;
    width: 32.100px;
    height: 26px;
}
.app svg {
    width: 16px;
    height: 16px;
}
.app .big {
    width: 18px;
    height: 18px;
}
.run::after {
    content: "";
    position: absolute;
    left: 3px;
    right: 3px;
    bottom: 0;
    height: 2px;
    background-color: #3b79bb;
}
.focus {
    background-color: #a898a3;
}
.focus::after {
    left: 0;
    right: 0;
}
.blurple {
    fill: #5662dc;
    stroke: none;
}
.badge {
    position: absolute;
    right: 3px;
    top: 11px;
    width: 12px;
    height: 12px;
    border-radius: 50%;
    background-color: #c9c5c9;
    font-size: 8px;
    line-height: 12px;
    text-align: center;
    color: #222;
}
.tray {
    width: 150px;
    height: 14px;
    margin: 5px 0 0 3px;
    stroke: #20101d;
    opacity: .75;
}
.watermark {
    position: absolute;
    left: 540px;
    top: 4px;
    display: flex;
    height: 18px;
    font-family: "DejaVu Sans", sans-serif;
    font-weight: bold;
    line-height: 18px;
    color: #f1f1f1;
    text-shadow: 1px 0 1px #444, -1px 0 1px #444, 0 1px 1px #444, 0 -1px 1px #444, 1px 1px 2px #333;
}
.www {
    width: 48px;
    font-size: 13px;
    letter-spacing: 2.100px;
}
.brand {
    width: 108px;
    font-size: 16px;
    letter-spacing: 1px;
}
.com {
    font-size: 13px;
}
```
